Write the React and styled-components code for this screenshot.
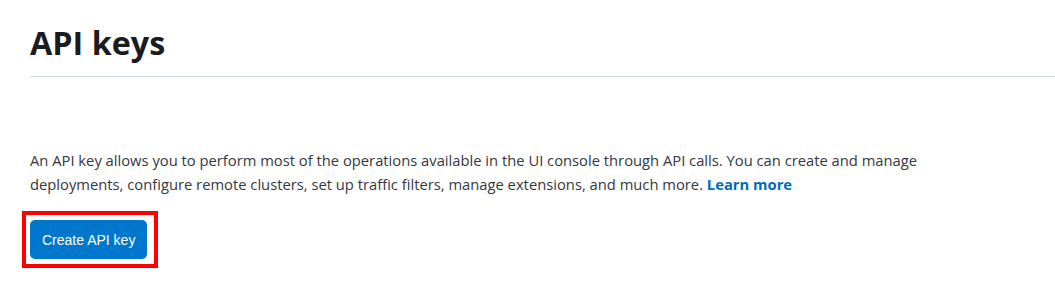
import styled, { createGlobalStyle } from "styled-components";

const GlobalStyle = createGlobalStyle`
  body {
    margin: 0;
    background: #fff;
    font-family: "Open Sans", "Noto Sans", sans-serif;
  }
`;

export default function App() {
  return (
    <>
      <GlobalStyle />
      <Page>
        <Header>
          <Title>API keys</Title>
        </Header>
        <Body>
          <Description>
            An API key allows you to perform most of the operations available in the UI console
            through API calls. You can create and manage deployments, configure remote clusters,
            set up traffic filters, manage extensions, and much more.{" "}
            <LearnMore href="#">Learn more</LearnMore>
          </Description>
          <Highlight>
            <CreateButton type="button">Create API key</CreateButton>
          </Highlight>
        </Body>
      </Page>
    </>
  );
}

const Page = styled.div`
  padding-left: 30px;
  padding-top: 20px;
`;

const Header = styled.div`
  border-bottom: 1px solid #d3dae6;
  padding-bottom: 12px;
`;

const Title = styled.h1`
  margin: 0;
  font-family: "Open Sans", sans-serif;
  font-size: 32.3px;
  line-height: 44px;
  font-weight: 700;
  color: #1a1c21;
`;

const Body = styled.div`
  padding-top: 71px;
`;

const Description = styled.p`
  margin: 0 0 15px;
  max-width: 940px;
  font-size: 14.75px;
  line-height: 24px;
  color: #343741;
`;

const LearnMore = styled.a`
  color: #006bb8;
  font-weight: 700;
  text-decoration: none;
`;

const Highlight = styled.div`
  display: inline-block;
  margin-left: -8px;
  padding: 5px 7px 5px 4px;
  border: 4px solid #ff0000;
`;

const CreateButton = styled.button`
  display: block;
  height: 39px;
  padding: 0 12px;
  border: none;
  border-radius: 5px;
  background: #0077cc;
  color: #fff;
  font-family: "Liberation Sans", Arial, sans-serif;
  font-size: 14px;
  cursor: pointer;
`;
